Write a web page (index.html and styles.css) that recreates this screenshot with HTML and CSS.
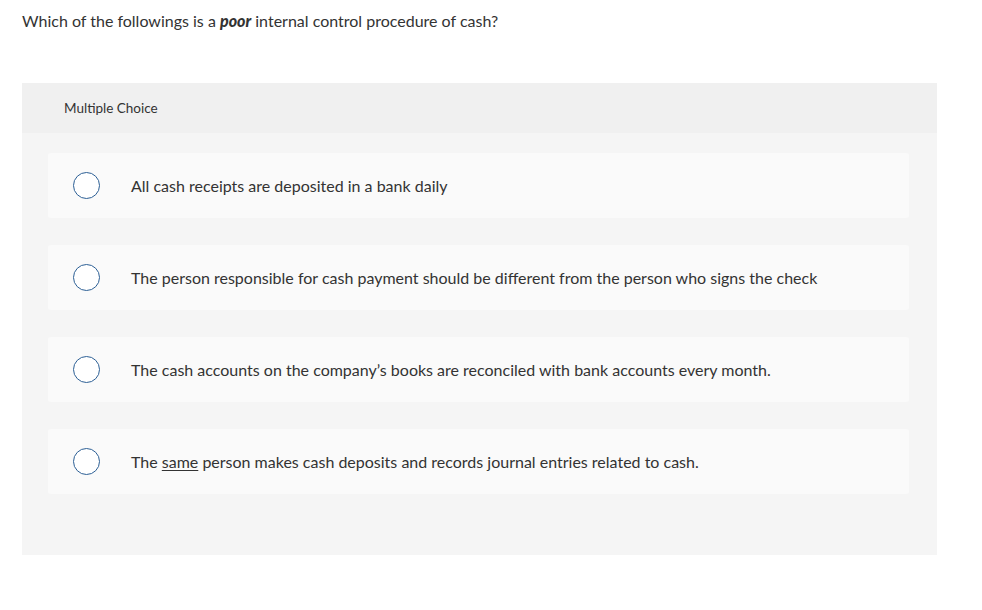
FILE: index.html
```html
<!DOCTYPE html>
<html>
<head>
<meta charset="utf-8">
<link rel="stylesheet" href="styles.css">
</head>
<body>
<div class="page">
  <p class="question">Which of the followings is a <b><i>poor</i></b> internal control procedure of cash?</p>
  <div class="panel">
    <div class="panel-head">Multiple Choice</div>
    <div class="options">
      <label class="option"><span class="radio"></span><span class="text">All cash receipts are deposited in a bank daily</span></label>
      <label class="option"><span class="radio"></span><span class="text">The person responsible for cash payment should be different from the person who signs the check</span></label>
      <label class="option"><span class="radio"></span><span class="text">The cash accounts on the company’s books are reconciled with bank accounts every month.</span></label>
      <label class="option"><span class="radio"></span><span class="text">The <u>same</u> person makes cash deposits and records journal entries related to cash.</span></label>
    </div>
  </div>
</div>
</body>
</html>
```

FILE: styles.css
```css
html, body { margin: 0; padding: 0; background: #fff; }
body { font-family: "Lato", "Open Sans", sans-serif; color: #333; }
.page { padding: 0 45px 0 22px; }
.question { margin: 0; padding-top: 11px; font-size: 16px; line-height: 20px; color: #333; }
.question b { font-weight: 900; }
.panel { margin-top: 52px; width: 915px; background: #f5f5f5; padding-bottom: 61px; }
.panel-head { height: 50px; background: #f0f0f0; display: flex; align-items: center; padding-left: 42px; font-size: 13.5px; color: #333; }
.options { display: flex; flex-direction: column; gap: 27px; padding: 20px 28px 0 26px; }
.option { display: flex; align-items: center; height: 65px; background: #fafafa; border-radius: 3px; padding-left: 25px; }
.radio { width: 25px; height: 25px; border: 1.5px solid #2c5f95; border-radius: 50%; background: #fff; flex: none; }
.text { margin-left: 31px; font-size: 16px; color: #333; }
.text u { text-underline-offset: 2px; }
```
